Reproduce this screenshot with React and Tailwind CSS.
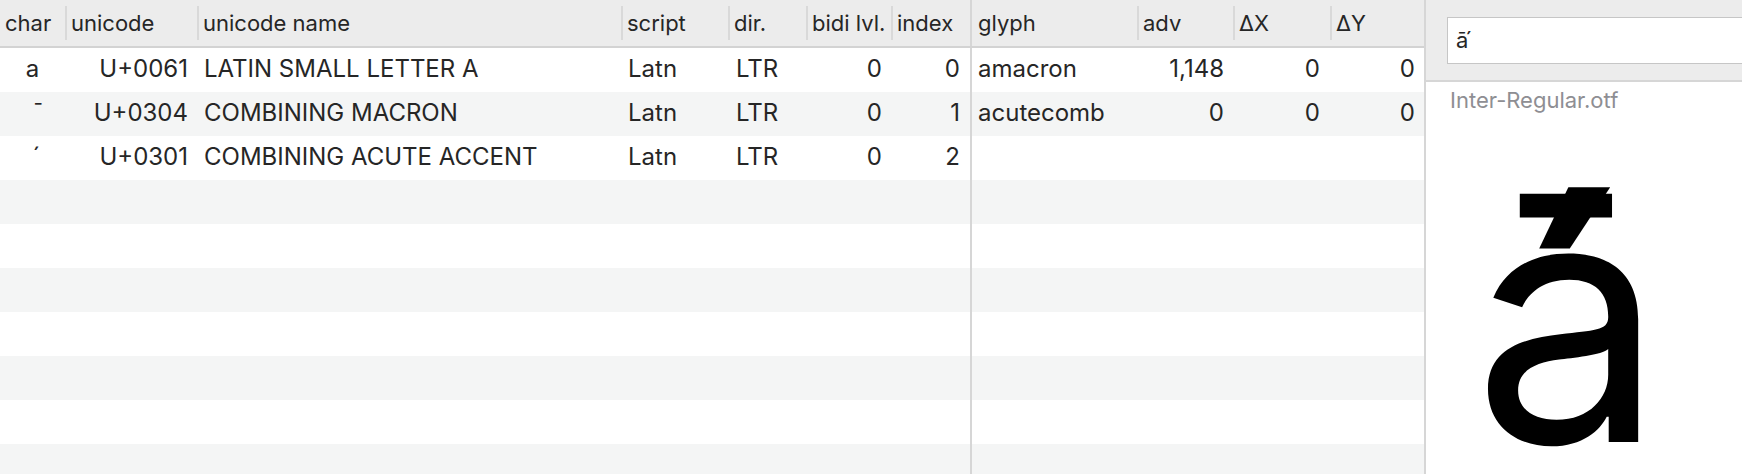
const COLS = 'grid grid-cols-[65px_132px_424px_107px_78px_85px_79px_2px_165px_96px_97px_94px]'

const HEAD = [
  { label: 'char', rule: false },
  { label: 'unicode', rule: true },
  { label: 'unicode name', rule: true },
  { label: 'script', rule: true },
  { label: 'dir.', rule: true },
  { label: 'bidi lvl.', rule: true },
  { label: 'index', rule: true },
  null,
  { label: 'glyph', rule: false },
  { label: 'adv', rule: true },
  { label: 'ΔX', rule: true },
  { label: 'ΔY', rule: true },
]

const ROWS = [
  ['a', 'U+0061', 'LATIN SMALL LETTER A', 'Latn', 'LTR', '0', '0', 'amacron', '1,148', '0', '0'],
  ['\u0304', 'U+0304', 'COMBINING MACRON', 'Latn', 'LTR', '0', '1', 'acutecomb', '0', '0', '0'],
  ['\u0301', 'U+0301', 'COMBINING ACUTE ACCENT', 'Latn', 'LTR', '0', '2', '', '', '', ''],
]

// text alignment per data column (divider skipped)
const ALIGN = [
  'justify-center',
  'justify-end pr-[9px]',
  'justify-start pl-[7px]',
  'justify-start pl-[7px]',
  'justify-start pl-[8px]',
  'justify-end pr-[9px]',
  'justify-end pr-[10px]',
  'justify-start pl-[6px]',
  'justify-end pr-[9px]',
  'justify-end pr-[10px]',
  'justify-end pr-[9px]',
]

function HeaderRow() {
  return (
    <div className={`${COLS} h-[48px] border-b-2 border-[#d3d3d3] bg-[#ececec] text-[22px] text-[#262626]`}>
      {HEAD.map((h, i) =>
        h === null ? (
          <div key={i} className="bg-[#d6d6d6]" />
        ) : (
          <div key={i} className={`flex items-center ${i === 0 ? 'pl-[5px]' : i === 8 ? 'pl-[6px]' : ''}`}>
            {h.rule && <span className="mr-[4px] h-[34px] w-[2px] shrink-0 bg-[#d9d9d9]" />}
            <span className="whitespace-nowrap">{h.label}</span>
          </div>
        ),
      )}
    </div>
  )
}

function BodyRow({ cells, shade }) {
  const values = cells || Array(11).fill('')
  return (
    <div className={`${COLS} h-[44px] ${shade ? 'bg-[#f4f5f5]' : 'bg-white'} text-[24px] text-[#262626]`}>
      {values.slice(0, 7).map((v, i) => (
        <div key={i} className={`flex items-center pb-[3px] whitespace-nowrap ${ALIGN[i]}`}>
          {v}
        </div>
      ))}
      <div className="bg-[#d6d6d6]" />
      {values.slice(7).map((v, i) => (
        <div key={i + 7} className={`flex items-center pb-[3px] whitespace-nowrap ${ALIGN[i + 7]}`}>
          {v}
        </div>
      ))}
    </div>
  )
}

function Preview() {
  return (
    <div className="flex min-w-0 flex-1 flex-col bg-white">
      <div className="flex h-[82px] shrink-0 border-b-2 border-[#d6d6d6] bg-[#ececec] pt-[17px] pl-[21px]">
        <div className="flex h-[47px] w-[340px] shrink-0 items-center border border-[#c6c6c6] bg-white pl-[8px] text-[22px] text-[#262626]">
          <span>ā</span>
          <span className="-ml-[3px]">´</span>
        </div>
      </div>
      <div className="pt-[2px] pl-[24px] text-[22px] text-[#8e8e93]">Inter-Regular.otf</div>
      {/* shaped preview: acutecomb has no offset, so it sits on the macron */}
      <div className="mt-[31px] ml-[47px] flex text-[341px] leading-none whitespace-nowrap text-black">
        <span>ā</span>
        <span className="relative top-[9px] -ml-[146px] origin-[50%_52px] scale-125">´</span>
      </div>
    </div>
  )
}

export default function App() {
  return (
    <div className="flex h-[474px] w-[1742px] overflow-hidden bg-white font-['Inter',sans-serif]">
      <div className="w-[1424px] shrink-0">
        <HeaderRow />
        {Array.from({ length: 10 }).map((_, i) => (
          <BodyRow key={i} cells={ROWS[i]} shade={i % 2 === 1} />
        ))}
      </div>
      <div className="w-[2px] shrink-0 bg-[#d6d6d6]" />
      <Preview />
    </div>
  )
}
